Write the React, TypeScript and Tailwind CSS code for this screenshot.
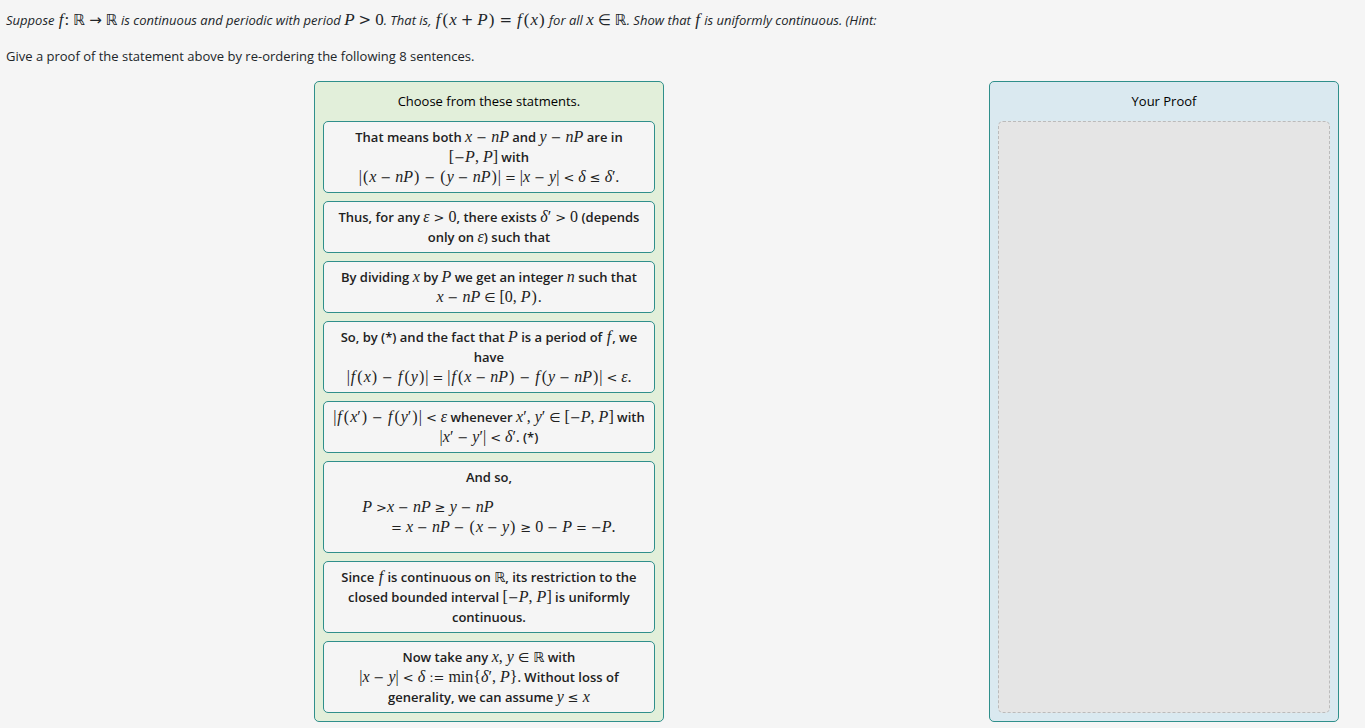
import React from "react";
import clsx from "clsx";

type Statement = {
    id: string;
    content: React.ReactNode;
};

// Splits an expression into letters, operators (with any spaces round them) and the rest
const tokenize = (source: string) =>
    source.match(/ ?(?::=|[=<>≤≥∈→+−]) ?|min|ℝ|[a-zA-Zδε]|[,:] ?|[^a-zA-Zδεℝ ]/g) || [];

const MathText = ({ children, large }: { children: string; large?: boolean }) => {
    return (
        <span
            className={clsx(
                "whitespace-nowrap font-['Liberation_Serif',serif] font-normal not-italic leading-none",
                large ? "text-[17px]" : "text-[16px]"
            )}
        >
            {tokenize(children).map((token, index) => {
                const symbol = token.trim();
                if (/^[a-zA-Zδε]$/.test(symbol)) {
                    return (
                        <i key={index} className={clsx(symbol === "f" && "mx-px")}>
                            {symbol}
                        </i>
                    );
                }
                return (
                    <span
                        key={index}
                        className={clsx(
                            /[=<>≤≥∈→+−]/.test(symbol) && "font-['DejaVu_Sans',sans-serif]",
                            /[=<>≤≥∈→+−]/.test(symbol) && (large ? "text-[15px]" : "text-[13px]"),
                            symbol === "ℝ" && "font-['DejaVu_Sans',sans-serif]",
                            symbol === "ℝ" && (large ? "text-[15px]" : "text-[14px]"),
                            /[()]/.test(symbol) && "mx-px",
                            token.startsWith(" ") && "ml-1",
                            token.endsWith(" ") && "mr-1"
                        )}
                    >
                        {symbol}
                    </span>
                );
            })}
        </span>
    );
};

const statements: Statement[] = [
    {
        id: "both",
        content: (
            <>
                That means both <MathText>x − nP</MathText> and <MathText>y − nP</MathText> are in
                <br />
                <MathText>[−P, P]</MathText> with
                <br />
                <MathText>{"|(x − nP) − (y − nP)| = |x − y| < δ ≤ δ′"}</MathText>.
            </>
        ),
    },
    {
        id: "delta",
        content: (
            <>
                Thus, for any <MathText>{"ε > 0"}</MathText>, there exists{" "}
                <MathText>{"δ′ > 0"}</MathText> (depends
                <br />
                only on <MathText>ε</MathText>) such that
            </>
        ),
    },
    {
        id: "divide",
        content: (
            <>
                By dividing <MathText>x</MathText> by <MathText>P</MathText> we get an integer{" "}
                <MathText>n</MathText> such that
                <br />
                <MathText>x − nP ∈ [0, P)</MathText>.
            </>
        ),
    },
    {
        id: "period",
        content: (
            <>
                So, by (*) and the fact that <MathText>P</MathText> is a period of{" "}
                <MathText>f</MathText>, we
                <br />
                have
                <br />
                <MathText>{"|f(x) − f(y)| = |f(x − nP) − f(y − nP)| < ε"}</MathText>.
            </>
        ),
    },
    {
        id: "whenever",
        content: (
            <>
                <MathText>{"|f(x′) − f(y′)| < ε"}</MathText> whenever{" "}
                <MathText>x′, y′ ∈ [−P, P]</MathText> with
                <br />
                <MathText>{"|x′ − y′| < δ′"}</MathText>. (*)
            </>
        ),
    },
    {
        id: "andso",
        content: (
            <>
                And so,
                <span className="my-[10px] grid auto-rows-[20px] grid-cols-[auto_auto] items-center justify-center text-left">
                    <MathText>{"P >"}</MathText>
                    <MathText>x − nP ≥ y − nP</MathText>
                    <span />
                    <MathText>{" = x − nP − (x − y) ≥ 0 − P = −P."}</MathText>
                </span>
            </>
        ),
    },
    {
        id: "restriction",
        content: (
            <>
                Since <MathText>f</MathText> is continuous on <MathText>ℝ</MathText>, its
                restriction to the
                <br />
                closed bounded interval <MathText>[−P, P]</MathText> is uniformly
                <br />
                continuous.
            </>
        ),
    },
    {
        id: "take",
        content: (
            <>
                Now take any <MathText>x, y ∈ ℝ</MathText> with
                <br />
                <MathText>{"|x − y| < δ := min{δ′, P}"}</MathText>. Without loss of
                <br />
                generality, we can assume <MathText>y ≤ x</MathText>
            </>
        ),
    },
];

const StatementCard = ({ children }: { children: React.ReactNode }) => {
    return (
        <li className="cursor-move rounded-[5px] border border-[#2f8f8b] bg-[#f5f5f5] px-2 py-[5px] text-center font-semibold text-[#212121]">
            {children}
        </li>
    );
};

const Panel = ({
    title,
    className,
    children,
}: {
    title: string;
    className: string;
    children: React.ReactNode;
}) => {
    return (
        <section
            className={clsx(
                "flex w-[350px] flex-col rounded-[5px] border border-[#2f8f8b] p-2",
                className
            )}
        >
            <h2 className="mt-px mb-[10px] text-center text-black">{title}</h2>
            {children}
        </section>
    );
};

function App() {
    return (
        <main className="min-h-screen bg-[#f5f5f5] pt-[10px] pb-[6px] font-['Open_Sans',sans-serif] text-[13px] leading-5 text-[#212529]">
            <p className="mb-4 px-[6px] italic">
                Suppose <MathText large>f: ℝ → ℝ</MathText> is continuous and periodic with period{" "}
                <MathText large>{"P > 0"}</MathText>. That is,{" "}
                <MathText large>f(x + P) = f(x)</MathText> for all{" "}
                <MathText large>x ∈ ℝ</MathText>. Show that <MathText large>f</MathText> is
                uniformly continuous. (Hint:
            </p>
            <p className="mb-[15px] px-[6px]">
                Give a proof of the statement above by re-ordering the following 8 sentences.
            </p>
            <div className="flex justify-between pr-[26px] pl-[23%]">
                <Panel title="Choose from these statments." className="bg-[#e2efda]">
                    <ul className="flex flex-col gap-2">
                        {statements.map((statement) => (
                            <StatementCard key={statement.id}>{statement.content}</StatementCard>
                        ))}
                    </ul>
                </Panel>
                <Panel title="Your Proof" className="bg-[#dae9f0]">
                    <ul className="flex-1 rounded-[5px] border border-dashed border-[#bbb] bg-[#e5e5e5]" />
                </Panel>
            </div>
        </main>
    );
}

export default App;
